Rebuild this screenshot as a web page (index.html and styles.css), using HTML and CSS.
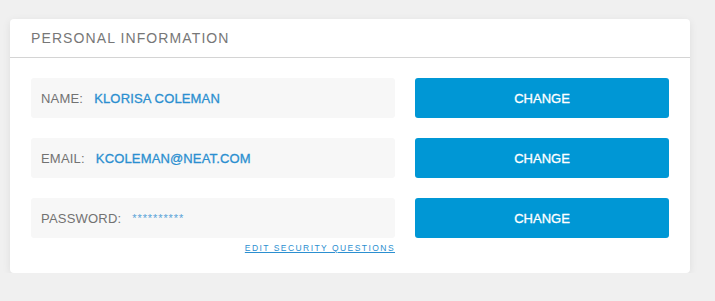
FILE: index.html
```html
<!DOCTYPE html>
<html lang="en">
<head>
  <meta charset="UTF-8" />
  <title>Personal Information</title>
  <link rel="stylesheet" href="styles.css">
</head>
<body>
  <div class="card">
    <div class="card-header">Personal Information</div>
    <div class="card-body">
      <div class="row">
        <div class="field"><span class="label">Name:</span><span class="value">Klorisa Coleman</span></div>
        <button class="change">Change</button>
      </div>
      <div class="row">
        <div class="field"><span class="label">Email:</span><span class="value">kcoleman@neat.com</span></div>
        <button class="change">Change</button>
      </div>
      <div class="row">
        <div class="field"><span class="label">Password:</span><span class="value secret">**********</span></div>
        <button class="change">Change</button>
      </div>
      <div class="links">
        <a href="#" class="security-link">Edit Security Questions</a>
      </div>
    </div>
  </div>
</body>
</html>
```

FILE: styles.css
```css
body {
  margin: 0;
  padding: 19px 25px 0 10px;
  background-color: #f0f0f0;
  font-family: "Liberation Sans", Arial, sans-serif;
}

.card {
  width: 680px;
  background-color: #ffffff;
  border-radius: 4px;
  box-shadow: 0 2px 8px rgba(0, 0, 0, 0.08);
}

.card-header {
  height: 38px;
  line-height: 38px;
  padding: 0 21px;
  border-bottom: 1px solid #d4d4d4;
  color: #777777;
  font-size: 14px;
  text-transform: uppercase;
  letter-spacing: 1.1px;
}

.card-body {
  padding: 20px 21px 19px 21px;
  display: flex;
  flex-direction: column;
  gap: 20px;
}

.row {
  display: grid;
  grid-template-columns: 364px 254px;
  gap: 20px;
}

.field {
  height: 40px;
  display: flex;
  align-items: center;
  padding-left: 10px;
  background-color: #f7f7f7;
  border-radius: 3px;
  font-size: 13px;
  text-transform: uppercase;
}

.label {
  color: #727272;
  margin-right: 11px;
  letter-spacing: 0.2px;
}

.value {
  color: #2b8fd0;
  letter-spacing: 0.15px;
  -webkit-text-stroke: 0.3px #2b8fd0;
}

.secret {
  font-size: 11px;
  color: #5aa3d8;
  letter-spacing: 0.9px;
  -webkit-text-stroke: 0;
}

.change {
  height: 40px;
  border: none;
  border-radius: 3px;
  background-color: #0097d5;
  color: #ffffff;
  font-family: inherit;
  font-size: 13px;
  text-transform: uppercase;
  -webkit-text-stroke: 0.3px #ffffff;
  cursor: pointer;
}

.links {
  width: 364px;
  margin-top: -18px;
  text-align: right;
  line-height: 12px;
}

.security-link {
  color: #2b8fd0;
  font-size: 8.5px;
  text-transform: uppercase;
  letter-spacing: 1.45px;
}
```
